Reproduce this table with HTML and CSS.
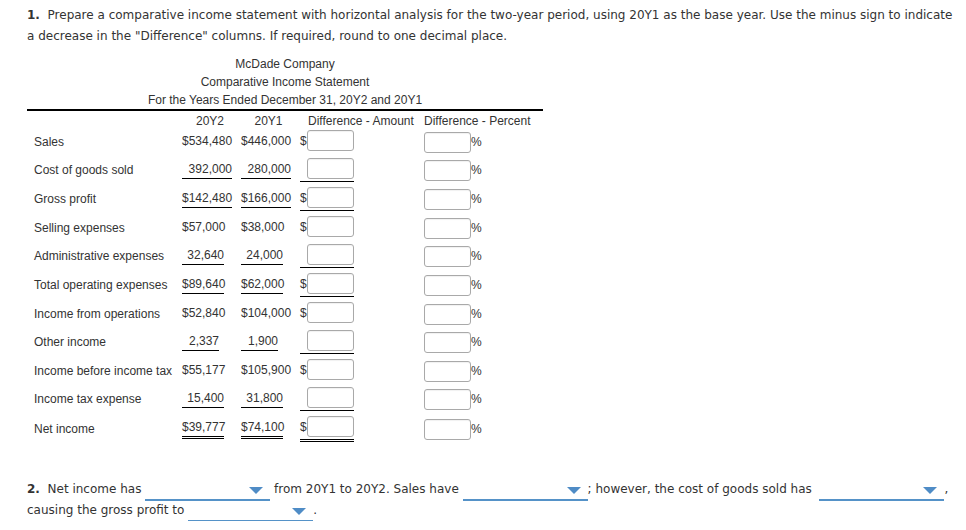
FILE: index.html
```html
<!DOCTYPE html>
<html>
<head>
<meta charset="utf-8">
<link rel="stylesheet" href="styles.css">
</head>
<body>
<div class="page">
  <p class="q"><b>1.</b>&nbsp; Prepare a comparative income statement with horizontal analysis for the two-year period, using 20Y1 as the base year. Use the minus sign to indicate<br>a decrease in the "Difference" columns. If required, round to one decimal place.</p>

  <div class="stmt">
    <div class="title">McDade Company<br>Comparative Income Statement<br>For the Years Ended December 31, 20Y2 and 20Y1</div>
    <table class="tbl">
      <colgroup>
        <col class="c-label"><col class="c-y"><col class="c-y"><col class="c-amt"><col class="c-pct">
      </colgroup>
      <thead>
        <tr>
          <th></th>
          <th class="h-y">20Y2</th>
          <th class="h-y">20Y1</th>
          <th class="h-amt">Difference - Amount</th>
          <th class="h-pct">Difference - Percent</th>
        </tr>
      </thead>
      <tbody>
        <tr>
          <td class="lbl">Sales</td>
          <td class="v1"><span class="val w50">$534,480</span></td>
          <td class="v2"><span class="val w50">$446,000</span></td>
          <td class="amt"><span class="box"><span class="cur">$</span><input class="inp" type="text"></span></td>
          <td class="pct"><input class="inp" type="text">%</td>
        </tr>
        <tr class="u">
          <td class="lbl">Cost of goods sold</td>
          <td class="v1"><span class="val w50 ul">392,000</span></td>
          <td class="v2"><span class="val w50 ul">280,000</span></td>
          <td class="amt"><span class="box ul"><span class="cur"></span><input class="inp" type="text"></span></td>
          <td class="pct"><input class="inp" type="text">%</td>
        </tr>
        <tr class="u">
          <td class="lbl">Gross profit</td>
          <td class="v1"><span class="val w50 ul">$142,480</span></td>
          <td class="v2"><span class="val w50 ul">$166,000</span></td>
          <td class="amt"><span class="box ul"><span class="cur">$</span><input class="inp" type="text"></span></td>
          <td class="pct"><input class="inp" type="text">%</td>
        </tr>
        <tr>
          <td class="lbl">Selling expenses</td>
          <td class="v1"><span class="val w42">$57,000</span></td>
          <td class="v2"><span class="val w42">$38,000</span></td>
          <td class="amt"><span class="box"><span class="cur">$</span><input class="inp" type="text"></span></td>
          <td class="pct"><input class="inp" type="text">%</td>
        </tr>
        <tr class="u">
          <td class="lbl">Administrative expenses</td>
          <td class="v1"><span class="val w42 ul">32,640</span></td>
          <td class="v2"><span class="val w42 ul">24,000</span></td>
          <td class="amt"><span class="box ul"><span class="cur"></span><input class="inp" type="text"></span></td>
          <td class="pct"><input class="inp" type="text">%</td>
        </tr>
        <tr class="u">
          <td class="lbl">Total operating expenses</td>
          <td class="v1"><span class="val w42 ul">$89,640</span></td>
          <td class="v2"><span class="val w42 ul">$62,000</span></td>
          <td class="amt"><span class="box ul"><span class="cur">$</span><input class="inp" type="text"></span></td>
          <td class="pct"><input class="inp" type="text">%</td>
        </tr>
        <tr>
          <td class="lbl">Income from operations</td>
          <td class="v1"><span class="val w42">$52,840</span></td>
          <td class="v2"><span class="val w50">$104,000</span></td>
          <td class="amt"><span class="box"><span class="cur">$</span><input class="inp" type="text"></span></td>
          <td class="pct"><input class="inp" type="text">%</td>
        </tr>
        <tr class="u">
          <td class="lbl">Other income</td>
          <td class="v1"><span class="val w37 ul">2,337</span></td>
          <td class="v2"><span class="val w37 ul">1,900</span></td>
          <td class="amt"><span class="box ul"><span class="cur"></span><input class="inp" type="text"></span></td>
          <td class="pct"><input class="inp" type="text">%</td>
        </tr>
        <tr>
          <td class="lbl">Income before income tax</td>
          <td class="v1"><span class="val w42">$55,177</span></td>
          <td class="v2"><span class="val w50">$105,900</span></td>
          <td class="amt"><span class="box"><span class="cur">$</span><input class="inp" type="text"></span></td>
          <td class="pct"><input class="inp" type="text">%</td>
        </tr>
        <tr class="u">
          <td class="lbl">Income tax expense</td>
          <td class="v1"><span class="val w42 ul">15,400</span></td>
          <td class="v2"><span class="val w42 ul">31,800</span></td>
          <td class="amt"><span class="box ul"><span class="cur"></span><input class="inp" type="text"></span></td>
          <td class="pct"><input class="inp" type="text">%</td>
        </tr>
        <tr class="d">
          <td class="lbl">Net income</td>
          <td class="v1"><span class="val w42 dl">$39,777</span></td>
          <td class="v2"><span class="val w42 dl">$74,100</span></td>
          <td class="amt"><span class="box dl"><span class="cur">$</span><input class="inp" type="text"></span></td>
          <td class="pct"><input class="inp" type="text">%</td>
        </tr>
      </tbody>
    </table>
  </div>

  <p class="q q2"><b>2.</b>&nbsp; Net income has <span class="dd"><span class="tri"></span></span> from 20Y1 to 20Y2. Sales have <span class="dd"><span class="tri"></span></span>; however, the cost of goods sold has&nbsp; <span class="dd"><span class="tri"></span></span>,<br>causing the gross profit to <span class="dd"><span class="tri"></span></span>.</p>
</div>
</body>
</html>
```

FILE: styles.css
```css
html, body {
  margin: 0;
  padding: 0;
  background: #fff;
}

.page {
  padding: 5px 0 0 27px;
}

.q {
  margin: 0;
  font-family: "DejaVu Sans", Verdana, sans-serif;
  font-size: 12px;
  line-height: 21px;
  color: #333;
  white-space: nowrap;
}

.q b {
  font-weight: bold;
}

.stmt {
  width: 516px;
  margin-top: 8px;
  font-family: "Liberation Sans", Arial, sans-serif;
  font-size: 12px;
  color: #333;
}

.title {
  text-align: center;
  line-height: 18px;
  border-bottom: 2px solid #000;
}

.tbl {
  width: 516px;
  border-collapse: collapse;
  table-layout: fixed;
  font-family: "Liberation Sans", Arial, sans-serif;
  font-size: 12px;
  color: #333;
}

.c-label { width: 153px; }
.c-y { width: 58px; }
.c-amt { width: 122px; }
.c-pct { width: 125px; }

.tbl th {
  font-weight: normal;
  padding: 3px 0 0 0;
  line-height: 14px;
  height: 14px;
  white-space: nowrap;
}

.h-y { text-align: center; }
.tbl th.h-y:nth-child(2) { padding-left: 2px; }
.tbl th.h-y:nth-child(3) { padding-left: 3px; }
.h-amt { text-align: left; padding-left: 12px !important; }
.h-pct { text-align: left; padding-left: 6px !important; }

.tbl td {
  padding: 2px 0;
  vertical-align: middle;
  white-space: nowrap;
}

.tbl tr.u td { padding-bottom: 3px; }
.tbl tr.d td { padding-bottom: 3px; }

.lbl { padding-left: 7px !important; }
.v1 { padding-left: 2px !important; }
.v2 { padding-left: 3px !important; }
.amt { padding-left: 4px !important; }
.pct { padding-left: 6px !important; }

.val {
  display: inline-block;
  text-align: right;
  line-height: 15px;
  padding-bottom: 1px;
  border-bottom: 1px solid transparent;
  vertical-align: middle;
}

.w50 { width: 50px; }
.w42 { width: 42px; }
.w37 { width: 37px; }

.val.ul { border-bottom-color: #000; }
.val.dl { border-bottom: 3px double #000; }

.box {
  display: inline-flex;
  align-items: center;
  padding-bottom: 2px;
  border-bottom: 1px solid transparent;
  vertical-align: middle;
}

.box.ul { border-bottom-color: #000; }
.box.dl { border-bottom: 3px double #000; }

.cur {
  display: inline-block;
  width: 7px;
  line-height: 14px;
}

.inp {
  box-sizing: border-box;
  width: 47px;
  height: 21px;
  margin: 0;
  padding: 0 3px;
  border: 1px solid #a9a9a9;
  border-radius: 3px;
  box-shadow: inset 0 1px 1px rgba(0, 0, 0, 0.06);
  background: #fff;
  font: 12px "Liberation Sans", Arial, sans-serif;
  vertical-align: middle;
}

.q2 {
  margin-top: 34px;
}

.dd {
  position: relative;
  display: inline-block;
  width: 125px;
  height: 14px;
  border-bottom: 2px solid #5592c8;
  vertical-align: -5px;
  margin-bottom: -3px;
}

.tri {
  position: absolute;
  right: 7px;
  top: 2px;
  width: 0;
  height: 0;
  border-left: 7px solid transparent;
  border-right: 7px solid transparent;
  border-top: 7px solid #4f8cc6;
}
```
